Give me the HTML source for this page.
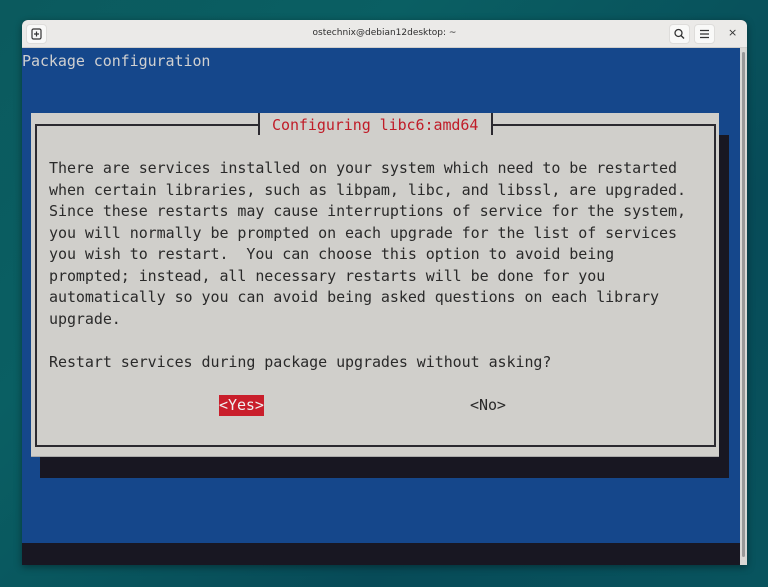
<!DOCTYPE html>
<html><head><style>
*{margin:0;padding:0;box-sizing:border-box}
body{width:768px;height:587px;overflow:hidden;background:linear-gradient(135deg,#0b5a5e 0%,#0a5f63 30%,#074b58 70%,#08545e 100%);position:relative;font-family:"DejaVu Sans Mono","Liberation Mono",monospace}
.win{position:absolute;left:22px;top:20px;width:725px;height:545px;background:#181722;border-radius:6px 6px 0 0;overflow:hidden;box-shadow:0 2px 8px rgba(0,0,0,.4)}
.tb{position:absolute;left:0;top:0;width:725px;height:28px;background:#ebeae8;border-bottom:1px solid #d0cfcc}
.title{position:absolute;left:0;right:0;top:8px;text-align:center;font:9px "DejaVu Sans",sans-serif;color:#2e2e2e}
.btn{position:absolute;top:4px;width:21px;height:20px;background:#f9f9f8;border-radius:4px;border:1px solid #dedddb}
.term{position:absolute;left:0;top:28px;width:718px;height:495px;background:#15478b}
.sb{position:absolute;left:718px;top:28px;width:7px;height:517px;background:#d9d8d5}
.sb div{position:absolute;left:2px;top:4px;width:3px;height:505px;background:#999;border-radius:2px}
.t{position:absolute;font-size:15px;white-space:pre;line-height:21.5px;letter-spacing:-0.06px}
</style></head><body>
<div class="win">
 <div class="tb">
  <div class="btn" style="left:4px"><svg width="19" height="18"><rect x="5" y="4" width="9" height="10" rx="1.5" fill="none" stroke="#333" stroke-width="1.2"/><path d="M9.5 6.5v5M7 9h5" stroke="#333" stroke-width="1.2"/></svg></div>
  <div class="title">ostechnix@debian12desktop: ~</div>
  <div class="btn" style="left:647px"><svg width="19" height="18"><circle cx="8.5" cy="8" r="3.5" fill="none" stroke="#333" stroke-width="1.3"/><path d="M11 10.5l3 3" stroke="#333" stroke-width="1.4"/></svg></div>
  <div class="btn" style="left:672px"><svg width="19" height="18"><path d="M5 5.5h9M5 9h9M5 12.5h9" stroke="#333" stroke-width="1.3"/></svg></div>
  <div style="position:absolute;left:706px;top:6px;font:11px 'DejaVu Sans',sans-serif;color:#333">×</div>
 </div>
 <div class="term">
  <div class="t" style="left:0;top:3px;color:#d0d0d0">Package configuration</div>
  <div style="position:absolute;left:18px;top:87px;width:689px;height:343px;background:#181722"></div>
  <div style="position:absolute;left:9px;top:65px;width:688px;height:344px;background:#d0cfcb;border-bottom:1px solid #aaa"></div>
  <div style="position:absolute;left:13px;top:76px;width:681px;height:323px;border:2px solid #2b2a30"></div>
  <div style="position:absolute;left:236px;top:65px;width:235px;height:22px;background:#d0cfcb;border-left:2px solid #2b2a30;border-right:2px solid #2b2a30"></div>
  <div class="t" style="left:250px;top:67px;color:#c01c28">Configuring libc6:amd64</div>
  <div class="t" style="left:27px;top:110px;color:#2a2a2a">There are services installed on your system which need to be restarted
when certain libraries, such as libpam, libc, and libssl, are upgraded.
Since these restarts may cause interruptions of service for the system,
you will normally be prompted on each upgrade for the list of services
you wish to restart.  You can choose this option to avoid being
prompted; instead, all necessary restarts will be done for you
automatically so you can avoid being asked questions on each library
upgrade.

Restart services during package upgrades without asking?</div>
  <div class="t" style="left:197px;top:347px;height:21px;background:#c91e2b;color:#f0f0f0">&lt;Yes&gt;</div>
  <div class="t" style="left:448px;top:347px;color:#2a2a2a">&lt;No&gt;</div>
 </div>
 <div class="sb"><div></div></div>
</div>
</body></html>
